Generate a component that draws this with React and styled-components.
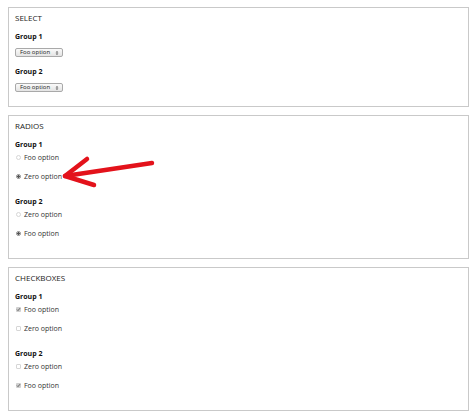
import React from 'react'
import styled, { createGlobalStyle } from 'styled-components'

const GlobalStyle = createGlobalStyle`
  body {
    margin: 0;
    background: #fff;
    font-family: "Open Sans", "Liberation Sans", sans-serif;
    color: #333;
  }
`

const sections = [
  {
    title: 'SELECT',
    kind: 'select',
    groups: [
      { label: 'Group 1', options: [{ text: 'Foo option' }] },
      { label: 'Group 2', options: [{ text: 'Foo option' }] },
    ],
  },
  {
    title: 'RADIOS',
    kind: 'radio',
    groups: [
      { label: 'Group 1', options: [{ text: 'Foo option' }, { text: 'Zero option', checked: true }] },
      { label: 'Group 2', options: [{ text: 'Zero option' }, { text: 'Foo option', checked: true }] },
    ],
  },
  {
    title: 'CHECKBOXES',
    kind: 'checkbox',
    groups: [
      { label: 'Group 1', options: [{ text: 'Foo option', checked: true }, { text: 'Zero option' }] },
      { label: 'Group 2', options: [{ text: 'Zero option' }, { text: 'Foo option', checked: true }] },
    ],
  },
]

function FakeSelect({ text }) {
  return (
    <SelectBox>
      <span>{text}</span>
      <svg width="4" height="6" viewBox="0 0 4 6">
        <path d="M0.6 2.5 L2 1 L3.4 2.5 Z M0.6 3.5 L2 5 L3.4 3.5 Z" fill="#555" />
      </svg>
    </SelectBox>
  )
}

function Option({ kind, text, checked }) {
  return (
    <OptionRow>
      {kind === 'radio' ? (
        <Radio checked={checked} />
      ) : (
        <Check checked={checked}>
          {checked && (
            <svg width="5" height="5" viewBox="0 0 5 5">
              <path d="M1 2.6 L2 3.6 L4 1.2" stroke="#555" strokeWidth="0.9" fill="none" />
            </svg>
          )}
        </Check>
      )}
      <span>{text}</span>
    </OptionRow>
  )
}

function App() {
  return (
    <Page>
      <GlobalStyle />
      {sections.map((s) => (
        <Panel key={s.title}>
          <Heading>{s.title}</Heading>
          {s.groups.map((g) => (
            <Group key={g.label}>
              <GroupLabel>{g.label}</GroupLabel>
              {s.kind === 'select'
                ? <FakeSelect text={g.options[0].text} />
                : g.options.map((o) => <Option key={o.text} kind={s.kind} {...o} />)}
            </Group>
          ))}
        </Panel>
      ))}
      <Arrow width="100" height="36" viewBox="0 0 100 36">
        <g stroke="#e3121b" strokeWidth="4.5" strokeLinecap="round" fill="none">
          <path d="M93 9 L6 22" />
          <path d="M28 5 L6 22 L35 31" strokeLinejoin="round" />
        </g>
      </Arrow>
    </Page>
  )
}
export default App

const Page = styled.div`
  position: relative;
  display: flex;
  flex-direction: column;
  gap: 8px;
  padding: 7px 5px 0 8px;
`

const Panel = styled.div`
  display: flex;
  flex-direction: column;
  border: 1px solid #c9c9c9;
  padding: 4px 6px 11px;
`

const Heading = styled.div`
  font-size: 8px;
  line-height: 12px;
  color: #222;
  margin-bottom: 8px;
`

const Group = styled.div`
  display: flex;
  flex-direction: column;
  align-items: flex-start;
  & + & {
    margin-top: 7px;
  }
`

const GroupLabel = styled.div`
  font-size: 7px;
  font-weight: 700;
  line-height: 10px;
  color: #111;
  margin-bottom: 2px;
`

const SelectBox = styled.div`
  box-sizing: border-box;
  width: 48px;
  height: 9px;
  margin: 4px 0 3px;
  padding: 0 3px 0 4px;
  display: flex;
  align-items: center;
  justify-content: space-between;
  border: 1px solid #a9a9a9;
  border-radius: 2px;
  background: linear-gradient(#fafafa, #e4e4e4);
  font-size: 6px;
  line-height: 7px;
  color: #222;
`

const OptionRow = styled.div`
  display: flex;
  align-items: center;
  height: 10px;
  margin-bottom: 9px;
  font-size: 7px;
  color: #333;
`

const Radio = styled.span`
  box-sizing: border-box;
  width: 5px;
  height: 5px;
  margin: 0 3px 0 1px;
  border-radius: 50%;
  border: 1px solid ${(p) => (p.checked ? '#8a8a8a' : '#d6d6d6')};
  background: ${(p) => (p.checked ? 'radial-gradient(circle, #555 0 1.1px, #e8e8e8 1.3px)' : '#fff')};
`

const Check = styled.span`
  box-sizing: border-box;
  display: flex;
  align-items: center;
  justify-content: center;
  width: 5px;
  height: 5px;
  margin: 0 3px 0 1px;
  border-radius: 1px;
  border: ${(p) => (p.checked ? '0' : '1px solid #d6d6d6')};
  background: ${(p) => (p.checked ? '#cfcfcf' : '#fff')};
`

const Arrow = styled.svg`
  position: absolute;
  left: 59px;
  top: 154px;
`
